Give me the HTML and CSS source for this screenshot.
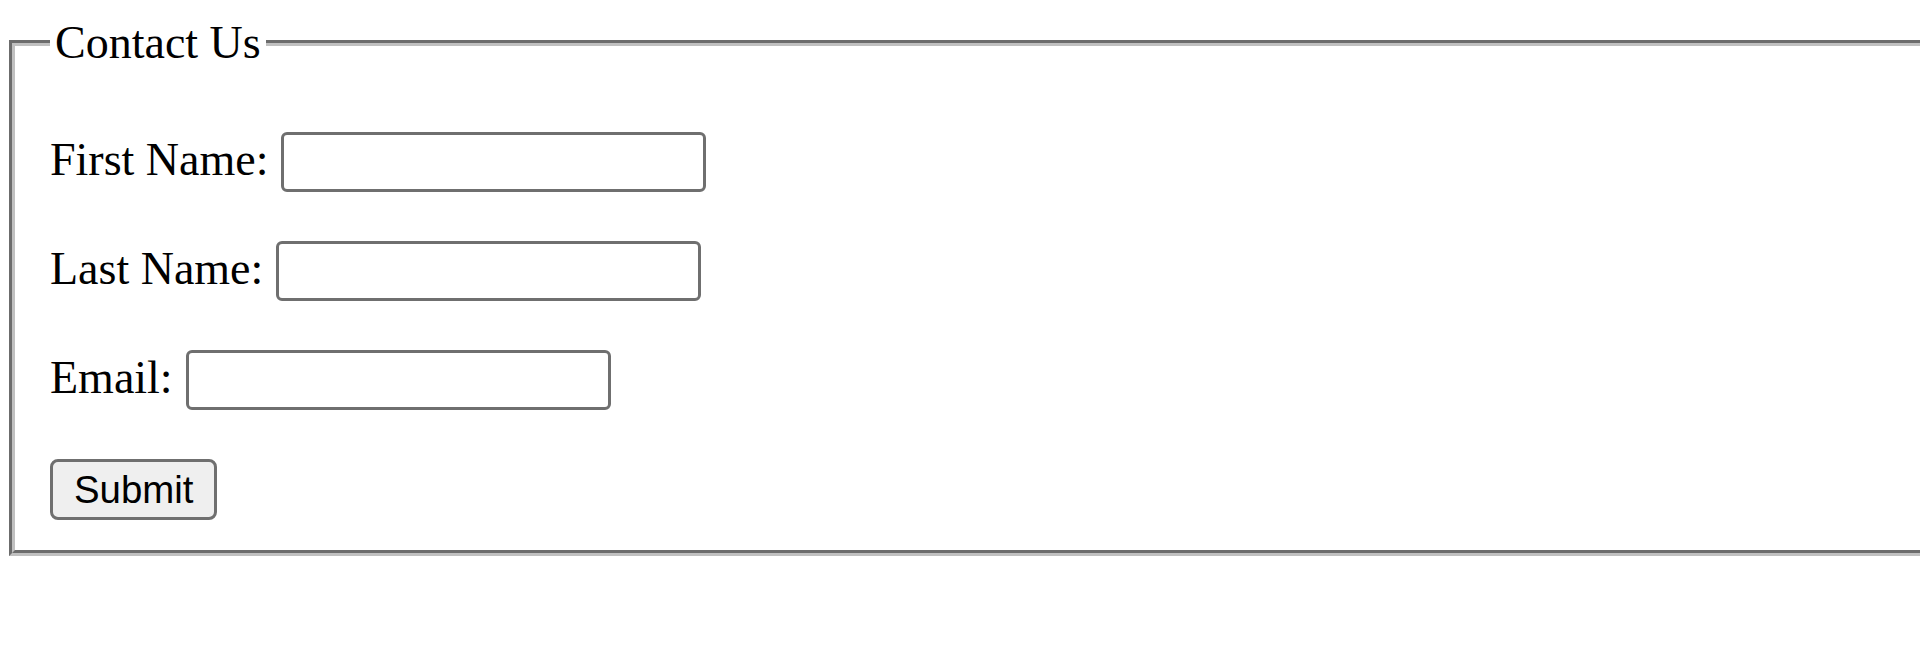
FILE: index.html
```html
<!DOCTYPE html>
<html lang="en">
<head>
<meta charset="utf-8">
<title>Contact Us</title>
<link rel="stylesheet" href="styles.css">
</head>
<body>
<form class="contact-form">
  <fieldset class="contact">
    <legend class="contact-legend">Contact Us</legend>
    <div class="rows">
      <div class="row">
        <label class="label" for="first">First Name:</label>
        <input class="field" type="text" id="first" name="first">
      </div>
      <div class="row">
        <label class="label" for="last">Last Name:</label>
        <input class="field" type="text" id="last" name="last">
      </div>
      <div class="row">
        <label class="label" for="email">Email:</label>
        <input class="field" type="email" id="email" name="email">
      </div>
      <div class="row">
        <button class="submit" type="submit">Submit</button>
      </div>
    </div>
  </fieldset>
</form>
</body>
</html>
```

FILE: styles.css
```css
html {
  overflow: hidden;
  background: #ffffff;
}

body {
  margin: 0;
  font-family: "Liberation Serif", "Times New Roman", serif;
  font-size: 46px;
  color: #000000;
}

.contact-form {
  margin: 0;
  padding: 16px 0 0 9px;
}

.contact {
  width: 2000px;
  margin: 0;
  border: 6px groove #c0c0c0;
  padding: 63px 35px 30px 35px;
  box-sizing: border-box;
}

.contact-legend {
  padding: 0 5px;
  font-size: 46px;
  line-height: normal;
}

.rows {
  display: flex;
  flex-direction: column;
  gap: 49px;
}

.row {
  display: flex;
  align-items: baseline;
  gap: 13px;
}

.label {
  font-size: 46px;
  line-height: normal;
}

.field {
  box-sizing: border-box;
  width: 425px;
  height: 60px;
  margin: 0;
  padding: 0 6px;
  border: 3px solid #6f6f6f;
  border-radius: 6px;
  background: #ffffff;
  font-family: "Liberation Sans", Arial, sans-serif;
  font-size: 38px;
}

.submit {
  box-sizing: border-box;
  height: 61px;
  margin: 0;
  padding: 0 21px;
  border: 3px solid #6f6f6f;
  border-radius: 8px;
  background: #efefef;
  color: #000000;
  font-family: "Liberation Sans", Arial, sans-serif;
  font-size: 38.4px;
}
```
